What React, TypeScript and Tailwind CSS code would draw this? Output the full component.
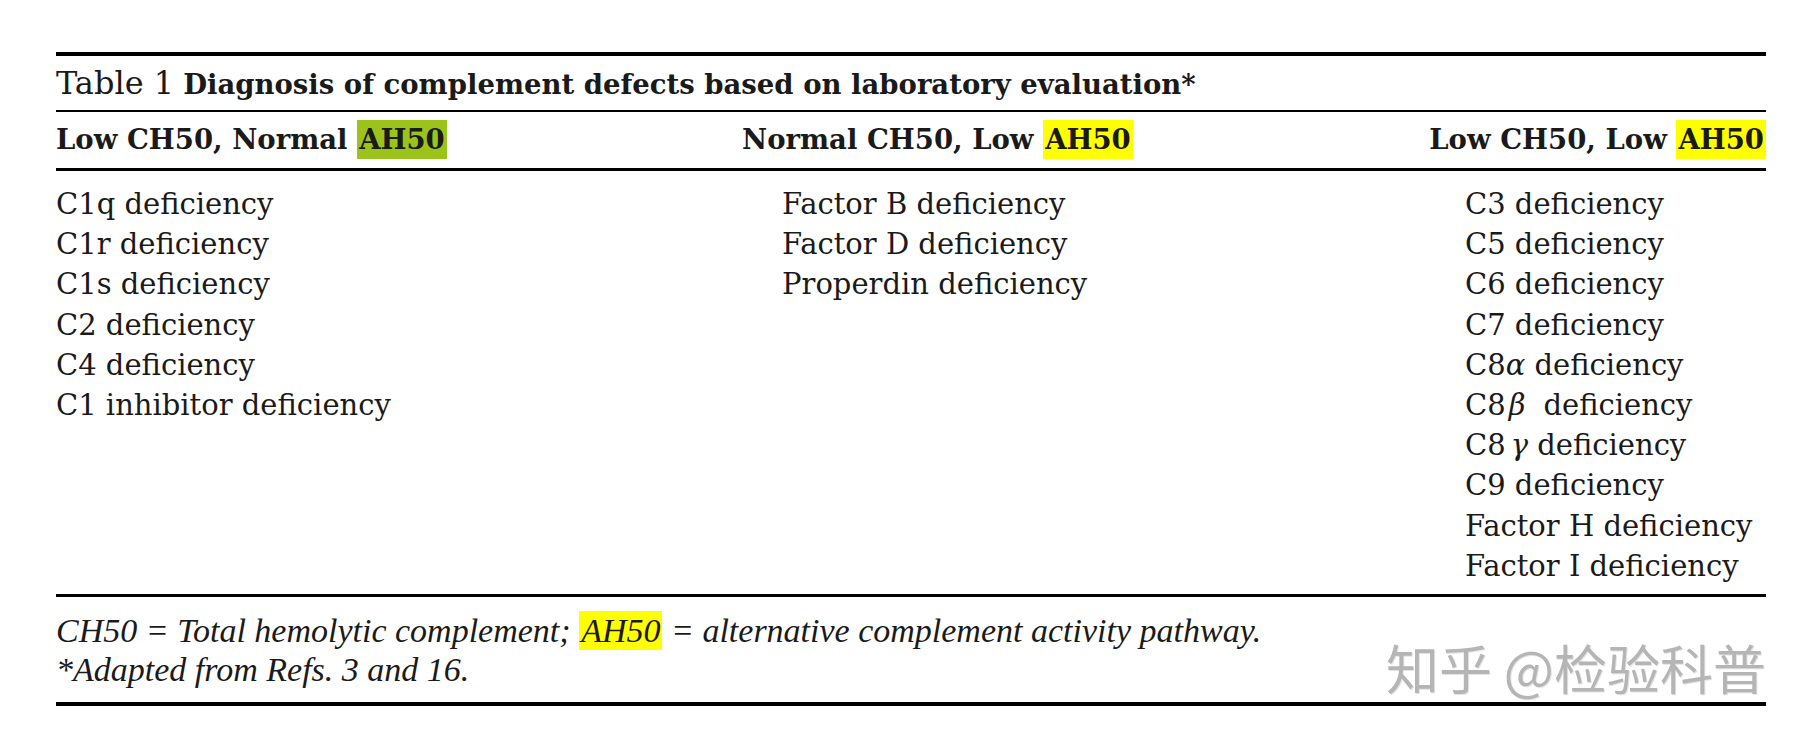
import React from "react";

const col1 = [
  "C1q deficiency",
  "C1r deficiency",
  "C1s deficiency",
  "C2 deficiency",
  "C4 deficiency",
  "C1 inhibitor deficiency",
];

const col2 = ["Factor B deficiency", "Factor D deficiency", "Properdin deficiency"];

const col3: React.ReactNode[] = [
  "C3 deficiency",
  "C5 deficiency",
  "C6 deficiency",
  "C7 deficiency",
  <>
    C8<span className="italic">α</span> deficiency
  </>,
  <>
    C8<span className="italic ml-[3px] mr-[18px]">β</span>deficiency
  </>,
  <>
    C8<span className="italic ml-[5px]">γ</span> deficiency
  </>,
  "C9 deficiency",
  "Factor H deficiency",
  "Factor I deficiency",
];

const Mark: React.FC<{ green?: boolean; children: React.ReactNode }> = ({ green, children }) => (
  <span
    className={`inline-block h-[39px] leading-[39px] px-[2px] ${
      green ? "bg-[#9bc31c]" : "bg-[#ffff00]"
    }`}
  >
    {children}
  </span>
);

export default function App() {
  return (
    <div className="w-[1817px] h-[743px] bg-white pt-[52px] text-[#1a1a1a] font-['DejaVu_Serif',serif]">
      <div className="ml-[56px] w-[1710px]">
        {/* Caption */}
        <div className="border-t-[4px] border-black h-[58px] flex items-center leading-none">
          <div>
            <span className="text-[32px]">Table 1</span>
            <span className="font-bold text-[27.5px] ml-[9px]">
              Diagnosis of complement defects based on laboratory evaluation*
            </span>
          </div>
        </div>

        {/* Header row */}
        <div className="border-t-[2px] border-black h-[58px] grid grid-cols-[686px_685px_1fr] items-center font-bold text-[27.5px]">
          <div>
            Low CH50, Normal <Mark green>AH50</Mark>
          </div>
          <div>
            Normal CH50, Low <Mark>AH50</Mark>
          </div>
          <div className="text-right">
            Low CH50, Low <Mark>AH50</Mark>
          </div>
        </div>

        {/* Body */}
        <div className="border-t-[3px] border-black h-[426px] pt-[13px] grid grid-cols-[686px_685px_1fr] text-[29px] leading-[40.2px]">
          <div>
            {col1.map((t) => (
              <div key={t}>{t}</div>
            ))}
          </div>
          <div className="pl-[40px]">
            {col2.map((t) => (
              <div key={t}>{t}</div>
            ))}
          </div>
          <div className="pl-[38px] whitespace-nowrap">
            {col3.map((t, i) => (
              <div key={i}>{t}</div>
            ))}
          </div>
        </div>

        {/* Footnotes */}
        <div className="relative border-t-[3px] border-b-[4px] border-black h-[112px] pt-[14px] font-['Liberation_Serif',serif] italic text-[34px] leading-[38.5px]">
          <div>
            CH50 = Total hemolytic complement; <Mark>AH50</Mark> = alternative complement activity pathway.
          </div>
          <div>*Adapted from Refs. 3 and 16.</div>
          <div className="absolute right-0 top-[40px] not-italic font-['Noto_Sans_CJK_SC',sans-serif] text-[53px] leading-[60px] text-[#b5b5b5] [text-shadow:1px_1px_0_#e4e4e4]">
            知乎 @检验科普
          </div>
        </div>
      </div>
    </div>
  );
}
